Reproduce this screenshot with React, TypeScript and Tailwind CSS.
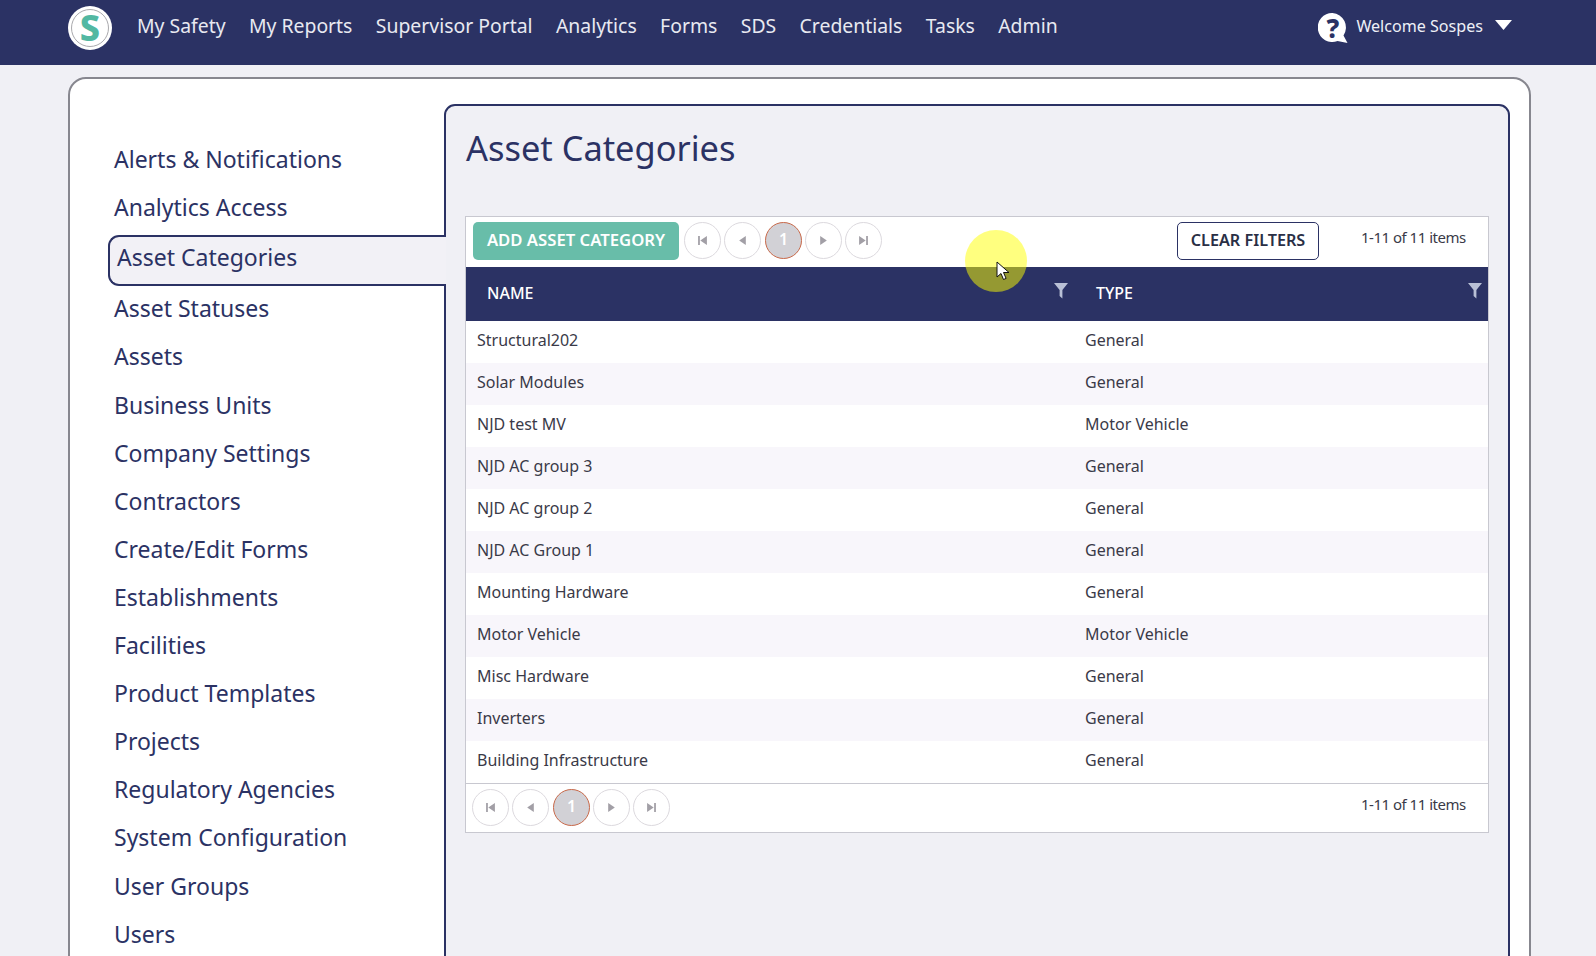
import React from "react";

const navItems = ["My Safety", "My Reports", "Supervisor Portal", "Analytics", "Forms", "SDS", "Credentials", "Tasks", "Admin"];
const sideItems = [
  "Alerts & Notifications", "Analytics Access", "Asset Categories", "Asset Statuses", "Assets", "Business Units",
  "Company Settings", "Contractors", "Create/Edit Forms", "Establishments", "Facilities", "Product Templates",
  "Projects", "Regulatory Agencies", "System Configuration", "User Groups", "Users",
];
const rows: [string, string][] = [
  ["Structural202", "General"], ["Solar Modules", "General"], ["NJD test MV", "Motor Vehicle"], ["NJD AC group 3", "General"],
  ["NJD AC group 2", "General"], ["NJD AC Group 1", "General"], ["Mounting Hardware", "General"], ["Motor Vehicle", "Motor Vehicle"],
  ["Misc Hardware", "General"], ["Inverters", "General"], ["Building Infrastructure", "General"],
];

function PagerIcon({ kind }: { kind: "first" | "prev" | "next" | "last" }) {
  return (
    <svg width="11" height="11" viewBox="0 0 10 10" fill="#a29fa6">
      {kind === "first" && <path d="M1 1h1.6v8H1zM9 1v8L3 5z" />}
      {kind === "prev" && <path d="M8 1v8L2 5z" />}
      {kind === "next" && <path d="M2 1v8l6-4z" />}
      {kind === "last" && <path d="M7.4 1H9v8H7.4zM1 1v8l6-4z" />}
    </svg>
  );
}

function Pager() {
  const btn = "flex h-[37px] w-[37px] items-center justify-center rounded-full border border-[#dcd9de] bg-white";
  return (
    <div className="flex items-center gap-[3px]">
      <div className={btn}><PagerIcon kind="first" /></div>
      <div className={btn}><PagerIcon kind="prev" /></div>
      <div className="ml-[1px] flex h-[37px] w-[37px] items-center justify-center rounded-full border border-[#c8694a] bg-[#d2d1d6] pb-[3px] text-[16px] font-semibold text-white">1</div>
      <div className={btn}><PagerIcon kind="next" /></div>
      <div className={btn}><PagerIcon kind="last" /></div>
    </div>
  );
}

function Funnel() {
  return (
    <svg width="14" height="16" viewBox="0 0 14 16">
      <path d="M0 0h14L8.4 7v8.5L5.6 13V7z" fill="#b9c0d6" />
    </svg>
  );
}

export default function App() {
  return (
    <div className="h-screen overflow-hidden bg-[#f0f0f5] font-['Noto_Sans',sans-serif] text-[#2b3264]">
      <header className="flex h-[65px] items-start bg-[#2b3264] pl-[68px] pr-[84px] text-white">
        <div className="mt-[6px] flex h-[44px] w-[44px] items-center justify-center rounded-full bg-white">
          <div className="flex h-[38px] w-[38px] items-center justify-center rounded-full border border-[#a9a9ad] pb-[1px] text-[36px] font-extrabold leading-none text-[#52b8a2]">S</div>
        </div>
        <nav className="ml-[25px] flex h-[52px] items-center gap-[23.4px] text-[19.4px] text-[#e8e9f1]">
          {navItems.map((n) => <span key={n}>{n}</span>)}
        </nav>
        <div className="ml-auto mt-[13px] flex items-start">
          <div className="relative h-[30px] w-[30px]">
            <svg width="30" height="30" viewBox="0 0 30 30" className="absolute inset-0">
              <path d="M14.5 0a14.5 14.5 0 1 0 5 28l10 2-4-7.5A14.5 14.5 0 0 0 14.5 0z" fill="#fff" />
            </svg>
            <span className="absolute inset-0 flex items-center justify-center pb-[1px] pr-[1px] text-[26px] font-extrabold leading-none text-[#2b3264]">?</span>
          </div>
          <span className="ml-[8px] text-[16.1px] leading-[26px] text-[#eef0f7]">Welcome Sospes</span>
          <svg width="17" height="10" viewBox="0 0 17 10" className="ml-[12px] mt-[7px]"><path d="M0 0h17L8.5 10z" fill="#fff" /></svg>
        </div>
      </header>

      <main className="ml-[68px] mt-[12px] flex h-[1000px] w-[1463px] rounded-t-[18px] border-2 border-[#87878f] bg-white pt-[25px]">
        <aside className="w-[374px] shrink-0 pt-[32px] text-[23px]">
          {sideItems.map((s, i) =>
            s === "Asset Categories" ? (
              <div key={s} className="relative z-10 mb-[-1.5px] ml-[38px] mr-[-2px] mt-[4px] flex h-[51px] items-center rounded-l-[11px] border-y-2 border-l-2 border-[#2b3264] bg-[#f2f1f6] pb-[6px] pl-[7px]">{s}</div>
            ) : (
              <div key={s} className={`flex items-center pl-[44px] ${i === 0 ? "h-[47px]" : "h-[48.1px]"}`}>{s}</div>
            )
          )}
        </aside>
        <section className="w-[1066px] rounded-t-[11px] border-2 border-[#2b3264] bg-[#f0f0f5] pl-[19px] pr-[19px]">
          <h1 className="ml-[1px] mt-[18px] h-[92px] text-[34.4px] font-normal leading-[48px]">Asset Categories</h1>
          <div className="w-[1024px] border border-[#c8c8d0] bg-white text-[16px] text-[#3a3a48]">
            <div className="flex h-[50px] items-start pl-[7px] pr-[23px] pt-[5px]">
              <div className="flex h-[38px] w-[206px] items-center justify-center rounded-[5px] bg-[#68bda9] pb-[2px] text-[16.7px] font-semibold text-white">ADD ASSET CATEGORY</div>
              <div className="ml-[5px]"><Pager /></div>
              <div className="ml-auto flex h-[38px] w-[142px] items-center justify-center rounded-[5px] border border-[#2b3264] pb-[1px] text-[16.2px] font-semibold text-[#2a2f45]">CLEAR FILTERS</div>
              <span className="ml-[42px] mt-[4px] w-[104px] whitespace-nowrap text-[15px] tracking-[-0.5px]">1-11 of 11 items</span>
            </div>
            <div className="grid h-[54px] grid-cols-[609px_1fr] bg-[#2b3264] text-[16px] font-medium text-white">
              <div className="relative flex items-center pb-[3px] pl-[21px]">NAME<span className="absolute left-[588px] top-[16px]"><Funnel /></span></div>
              <div className="relative flex items-center pb-[3px] pl-[21px]">TYPE<span className="absolute right-[6px] top-[16px]"><Funnel /></span></div>
            </div>
            {rows.map(([n, t], i) => (
              <div key={n} className={`grid h-[42px] grid-cols-[609px_1fr] items-center pb-[4px] ${i % 2 ? "bg-[#f8f6fb]" : "bg-white"}`}>
                <div className="pl-[11px]">{n}</div>
                <div className="pl-[10px]">{t}</div>
              </div>
            ))}
            <div className="flex h-[49px] items-start border-t border-[#c8c8d0] pl-[6px] pr-[23px] pt-[5px]">
              <Pager />
              <span className="ml-auto mt-[4px] w-[104px] whitespace-nowrap text-[15px] tracking-[-0.5px]">1-11 of 11 items</span>
            </div>
          </div>
        </section>
      </main>

      <div className="absolute left-[965px] top-[230px] h-[62px] w-[62px] rounded-full bg-[#ffff00]/50" />
      <svg width="14" height="20" viewBox="0 0 14 20" className="absolute left-[996px] top-[261px]">
        <path d="M1 1v15l4-3.5 2.5 6 2.6-1.1-2.6-5.9H13z" fill="#fff" stroke="#111" strokeWidth="1" />
      </svg>
    </div>
  );
}
